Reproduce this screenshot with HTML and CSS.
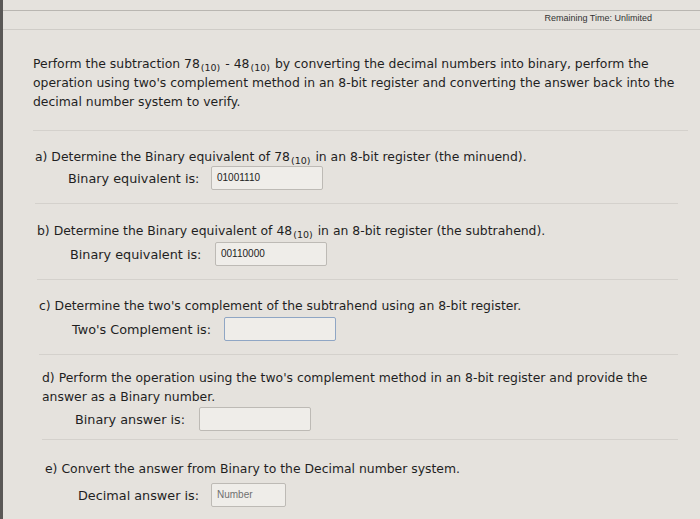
FILE: index.html
```html
<!DOCTYPE html>
<html>
<head>
<meta charset="utf-8">
<link rel="stylesheet" href="styles.css">
</head>
<body>
<div class="frame">
  <div class="topline"></div>
  <div class="timer">Remaining Time: Unlimited</div>
  <div class="content">
    <div class="section intro">
      <p>Perform the subtraction 78<sub>(10)</sub> - 48<sub>(10)</sub> by converting the decimal numbers into binary, perform the operation using two's complement method in an 8-bit register and converting the answer back into the decimal number system to verify.</p>
    </div>
    <div class="section qa">
      <p class="q">a) Determine the Binary equivalent of 78<sub>(10)</sub> in an 8-bit register (the minuend).</p>
      <div class="row"><span class="label">Binary equivalent is:</span><span class="box">01001110</span></div>
    </div>
    <div class="section qb">
      <p class="q">b) Determine the Binary equivalent of 48<sub>(10)</sub> in an 8-bit register (the subtrahend).</p>
      <div class="row"><span class="label">Binary equivalent is:</span><span class="box">00110000</span></div>
    </div>
    <div class="section qc">
      <p class="q">c) Determine the two's complement of the subtrahend using an 8-bit register.</p>
      <div class="row"><span class="label">Two's Complement is:</span><span class="box empty blue"></span></div>
    </div>
    <div class="section qd">
      <p class="q">d) Perform the operation using the two's complement method in an 8-bit register and provide the answer as a Binary number.</p>
      <div class="row"><span class="label">Binary answer is:</span><span class="box empty"></span></div>
    </div>
    <div class="section qe">
      <p class="q">e) Convert the answer from Binary to the Decimal number system.</p>
      <div class="row"><span class="label">Decimal answer is:</span><span class="box small placeholder">Number</span></div>
    </div>
  </div>
</div>
</body>
</html>
```
FILE: styles.css
```css
html, body {
  margin: 0;
  padding: 0;
}
body {
  background: #e5e2dd;
  font-family: "DejaVu Sans", Verdana, sans-serif;
  color: #1f1f1f;
  width: 700px;
  height: 519px;
  overflow: hidden;
}
.frame {
  border-left: 3px solid #5a5856;
  height: 519px;
  box-sizing: border-box;
}
.topline {
  height: 10px;
  border-bottom: 1px solid #b9b6b1;
}
.timer {
  height: 16px;
  border-bottom: 1px solid #cfccc7;
  font-family: "Liberation Sans", Arial, sans-serif;
  font-size: 9px;
  color: #333;
  text-align: right;
  padding-right: 48px;
  padding-top: 2px;
}
.content {
  padding-top: 24px;
  padding-right: 12px;
}
.section {
  border-bottom: 1px solid #d4d1cc;
  margin-left: 30px;
  margin-right: 10px;
}
.intro { margin-right: 0; }
p {
  margin: 0;
  font-size: 12.4px;
  line-height: 19px;
}
sub {
  font-size: 9.5px;
  vertical-align: -3px;
  line-height: 0;
  margin-left: 1px;
  margin-right: 1px;
}
.intro {
  padding-bottom: 19px;
}
.qa { padding-top: 16px; padding-bottom: 13px; margin-left: 32px; }
.qb { padding-top: 17px; padding-bottom: 13px; margin-left: 34px; }
.qc { padding-top: 16px; padding-bottom: 13px; margin-left: 36px; }
.qd { padding-top: 13px; padding-bottom: 8px; margin-left: 39px; }
.qe { padding-top: 19px; padding-bottom: 12px; margin-left: 42px; border-bottom: none; }
.row {
  display: flex;
  align-items: center;
  padding-left: 33px;
}
.qb .row, .qc .row { margin-top: 2px; }
.qd .row { margin-top: 1px; }
.qe .row { margin-top: 5px; }
.label {
  font-size: 12.8px;
  width: 143px;
}
.qb .label { width: 145px; }
.qc .label { width: 152px; }
.qd .label { width: 124px; }
.qe .label { width: 133px; }
.box {
  display: inline-block;
  width: 105px;
  height: 22px;
  border: 1px solid #bdbab5;
  background: #efede9;
  border-radius: 2px;
  font-family: "Liberation Sans", Arial, sans-serif;
  font-size: 10px;
  line-height: 22px;
  padding-left: 5px;
  color: #222;
}
.box.blue {
  border-color: #8fa6c4;
}
.box.small {
  width: 68px;
}
.placeholder {
  color: #707070;
}
```
